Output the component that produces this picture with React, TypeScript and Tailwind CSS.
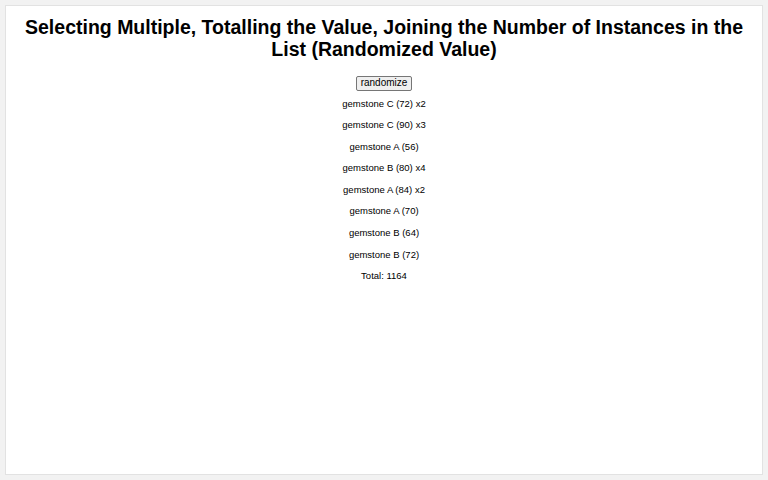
const items = [
  "gemstone C (72) x2",
  "gemstone C (90) x3",
  "gemstone A (56)",
  "gemstone B (80) x4",
  "gemstone A (84) x2",
  "gemstone A (70)",
  "gemstone B (64)",
  "gemstone B (72)",
];

export default function App() {
  return (
    <div className="h-[480px] bg-[#f2f2f2] p-[5px] font-['Liberation_Sans',Arial,sans-serif] text-black">
      <div className="h-full bg-white border border-[#e2e2e2] text-center pt-[10px]">
        <h1 className="text-[19.5px] font-bold leading-[22px] px-4">
          Selecting Multiple, Totalling the Value, Joining the Number of Instances in the List (Randomized Value)
        </h1>
        <div className="mt-[9px]">
          <button className="text-[10px] leading-[12px] px-[4px] py-[0.5px] bg-[#efefef] border border-[#767676] rounded-[2px]">
            randomize
          </button>
        </div>
        <div className="flex flex-col items-center text-[9.5px] leading-[12px] mt-[4.5px] gap-[9.6px]">
          {items.map((t, i) => (
            <p key={i}>{t}</p>
          ))}
          <p>Total: 1164</p>
        </div>
      </div>
    </div>
  );
}
